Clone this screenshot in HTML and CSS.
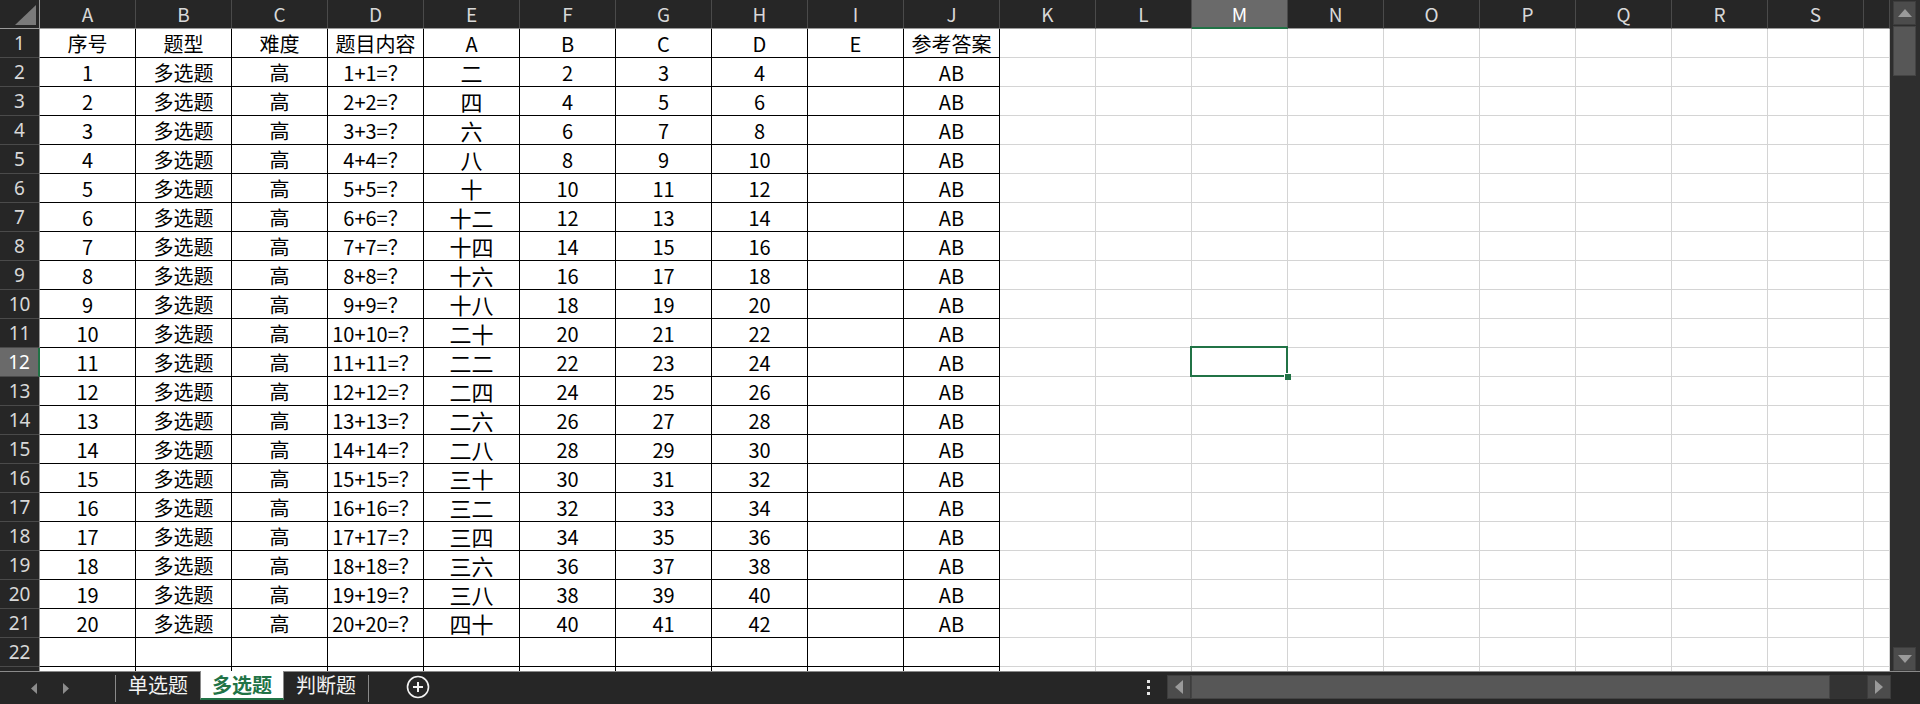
FILE: index.html
```html
<!DOCTYPE html>
<html lang="zh">

<head>
  <meta charset="UTF-8" />
  <meta name="viewport" content="width=device-width, initial-scale=1.0" />
  <title>多选题</title>
  <link rel="stylesheet" href="styles.css">
</head>

<body>
  <div class="app">
    <div class="sheet">
      <div class="grid-wrap">
        <div class="grid" id="grid"></div>
      </div>

      <div class="vscroll">
        <div class="sbtn">
          <svg width="14" height="8" viewBox="0 0 14 8"><polygon points="7,0 14,8 0,8" /></svg>
        </div>
        <div class="vthumb"></div>
        <div class="vtrack"></div>
        <div class="sbtn">
          <svg width="14" height="8" viewBox="0 0 14 8"><polygon points="0,0 14,0 7,8" /></svg>
        </div>
      </div>
    </div>

    <div class="tabbar">
      <div class="nav">
        <svg class="nav-arrow" width="6" height="11" viewBox="0 0 6 11"><polygon points="6,0 6,11 0,5.5" /></svg>
        <svg class="nav-arrow" width="6" height="11" viewBox="0 0 6 11"><polygon points="0,0 6,5.5 0,11" /></svg>
      </div>
      <div class="sep"></div>
      <div class="tabs">
        <div class="tab">单选题</div>
        <div class="tab current">多选题</div>
        <div class="tab">判断题</div>
      </div>
      <div class="sep"></div>
      <div class="add">
        <svg width="24" height="24" viewBox="0 0 24 24">
          <circle cx="12" cy="12" r="10.5" fill="none" stroke="#f2f2f2" stroke-width="1.6" />
          <path d="M12 7v10M7 12h10" stroke="#f2f2f2" stroke-width="2" />
        </svg>
      </div>
      <div class="spacer"></div>
      <div class="dots"><span></span><span></span><span></span></div>
      <div class="hscroll">
        <div class="sbtn">
          <svg width="8" height="14" viewBox="0 0 8 14"><polygon points="8,0 8,14 0,7" /></svg>
        </div>
        <div class="hthumb"></div>
        <div class="htrack"></div>
        <div class="sbtn">
          <svg width="8" height="14" viewBox="0 0 8 14"><polygon points="0,0 8,7 0,14" /></svg>
        </div>
      </div>
    </div>
  </div>

  <script>
    const grid = document.querySelector('#grid');
    const letters = 'ABCDEFGHIJKLMNOPQRST'.split('');

    // Option A is written out in Chinese numerals
    const numerals = ['二', '四', '六', '八', '十', '十二', '十四', '十六', '十八', '二十',
      '二二', '二四', '二六', '二八', '三十', '三二', '三四', '三六', '三八', '四十'];
    const titles = ['序号', '题型', '难度', '题目内容', 'A', 'B', 'C', 'D', 'E', '参考答案'];

    const rowValues = (row) => {
      if (row === 1) return titles;
      if (row > 21) return [];
      const n = row - 1;
      return [n, '多选题', '高', `${n}+${n}=？`, numerals[n - 1], 2 * n, 2 * n + 1, 2 * n + 2, '', 'AB'];
    };

    const addCell = (className, text) => {
      const el = document.createElement('div');
      el.className = className;
      el.textContent = text ?? '';
      grid.appendChild(el);
      return el;
    };

    addCell('corner');
    // column T is only a sliver, its letter falls outside the view
    letters.forEach(l => addCell(l === 'M' ? 'col-head active' : 'col-head', l === 'T' ? '' : l));

    for (let row = 1; row <= 23; row++) {
      addCell(row === 12 ? 'row-head active' : 'row-head', row < 23 ? row : '');
      const values = rowValues(row);
      letters.forEach((l, i) => {
        let cls = 'cell';
        if (i < 10) cls += ' boxed';
        if (i === 4 && row > 1) cls += ' numeral';
        if (l === 'M' && row === 12) cls += ' selected';
        addCell(cls, values[i]);
      });
    }
  </script>
</body>

</html>
```

FILE: styles.css
```css
:root {
  --chrome-bg: #262626;
  --head-line: #4a4a4a;
  --edge-line: #9a9a9a;
  --grid-line: #d4d4d4;
  --excel-green: #217346;
  --head-active: #6a6a6a;
}

body {
  margin: 0;
  background-color: var(--chrome-bg);
  font-family: "Noto Sans CJK SC", "Noto Sans", sans-serif;
  overflow: hidden;
}

.app {
  width: 1920px;
  height: 704px;
  display: flex;
  flex-direction: column;
}

.sheet {
  height: 671px;
  display: flex;
}

.grid-wrap {
  width: 1890px;
  overflow: hidden;
  background-color: #fff;
}

.grid {
  display: grid;
  grid-template-columns: 40px repeat(19, 96px) 26px;
  grid-template-rows: repeat(24, 29px);
}

/* headers */
.corner,
.col-head,
.row-head {
  box-sizing: border-box;
  background-color: var(--chrome-bg);
  color: #d8d8d8;
  text-align: center;
}

.corner {
  position: relative;
  border-right: 1px solid var(--edge-line);
  border-bottom: 1px solid var(--edge-line);
}

.corner::after {
  content: '';
  position: absolute;
  right: 3px;
  bottom: 3px;
  width: 21px;
  height: 20px;
  background-color: #7a7a7a;
  clip-path: polygon(100% 0, 100% 100%, 0 100%);
}

.col-head {
  border-right: 1px solid var(--head-line);
  border-bottom: 1px solid var(--edge-line);
  font-size: 19px;
  line-height: 28px;
}

.row-head {
  border-right: 1px solid var(--edge-line);
  border-bottom: 1px solid var(--head-line);
  font-family: "Noto Sans", sans-serif;
  font-size: 19px;
  line-height: 28px;
}

.col-head.active {
  background-color: var(--head-active);
  color: #fff;
  border-bottom: 2px solid var(--excel-green);
}

.row-head.active {
  background-color: var(--head-active);
  color: #fff;
  border-right: 2px solid var(--excel-green);
}

/* cells */
.cell {
  box-sizing: border-box;
  border-right: 1px solid var(--grid-line);
  border-bottom: 1px solid var(--grid-line);
  color: #000;
  font-size: 20px;
  line-height: 25px;
  padding-top: 2px;
  text-align: center;
  white-space: nowrap;
}

.cell.boxed {
  border-color: #000;
}

.cell.numeral {
  font-size: 22px;
}

.cell.selected {
  position: relative;
}

.cell.selected::after {
  content: '';
  position: absolute;
  left: -2px;
  top: -2px;
  right: -1px;
  bottom: -1px;
  border: 2px solid var(--excel-green);
}

.cell.selected::before {
  content: '';
  position: absolute;
  right: -4px;
  bottom: -4px;
  width: 6px;
  height: 6px;
  background-color: var(--excel-green);
  border-left: 1px solid #fff;
  border-top: 1px solid #fff;
  z-index: 1;
}

/* vertical scrollbar */
.vscroll {
  width: 30px;
  display: flex;
  flex-direction: column;
  align-items: flex-end;
  padding: 1px 4px 0 3px;
  box-sizing: border-box;
  background-color: #2e2e2e;
}

.sbtn {
  display: flex;
  align-items: center;
  justify-content: center;
  box-sizing: border-box;
  width: 23px;
  height: 24px;
  background-color: #4c4c4c;
  border: 1px solid #3d3d3d;
}

.sbtn svg {
  fill: #9a9a9a;
}

.vthumb {
  width: 23px;
  height: 50px;
  margin-top: 1px;
  box-sizing: border-box;
  background-color: #575757;
  border: 1px solid #444;
}

.vtrack {
  flex: 1;
}

/* sheet tabs */
.tabbar {
  height: 33px;
  box-sizing: border-box;
  border-top: 1px solid #8a8a8a;
  display: flex;
  align-items: flex-start;
}

.nav {
  width: 115px;
  height: 32px;
  display: flex;
  align-items: center;
  gap: 26px;
  padding-left: 31px;
  box-sizing: border-box;
}

.nav-arrow {
  fill: #8c8c8c;
}

.sep {
  width: 1px;
  height: 27px;
  margin-top: 3px;
  background-color: #8a8a8a;
}

.tabs {
  display: flex;
}

.tab {
  width: 84px;
  height: 29px;
  margin-top: -1px;
  box-sizing: border-box;
  text-align: center;
  font-size: 20px;
  line-height: 28px;
  color: #f2f2f2;
}

.tab.current {
  background-color: #fff;
  color: var(--excel-green);
  font-weight: 700;
  border-left: 1px solid #8a8a8a;
  border-right: 1px solid #8a8a8a;
  border-bottom: 2px solid var(--excel-green);
}

.add {
  margin-left: 37px;
  margin-top: 3px;
  height: 24px;
}

.spacer {
  flex: 1;
}

.dots {
  width: 3px;
  display: flex;
  flex-direction: column;
  gap: 3px;
  margin-top: 8px;
  margin-right: 17px;
}

.dots span {
  width: 3px;
  height: 3px;
  background-color: #e6e6e6;
}

.hscroll {
  width: 724px;
  height: 24px;
  margin-top: 3px;
  margin-right: 29px;
  display: flex;
  background-color: #2e2e2e;
}

.hscroll .sbtn {
  width: 24px;
}

.hthumb {
  width: 639px;
  box-sizing: border-box;
  background-color: #575757;
  border: 1px solid #444;
}

.htrack {
  flex: 1;
  background-color: #333;
}
```
